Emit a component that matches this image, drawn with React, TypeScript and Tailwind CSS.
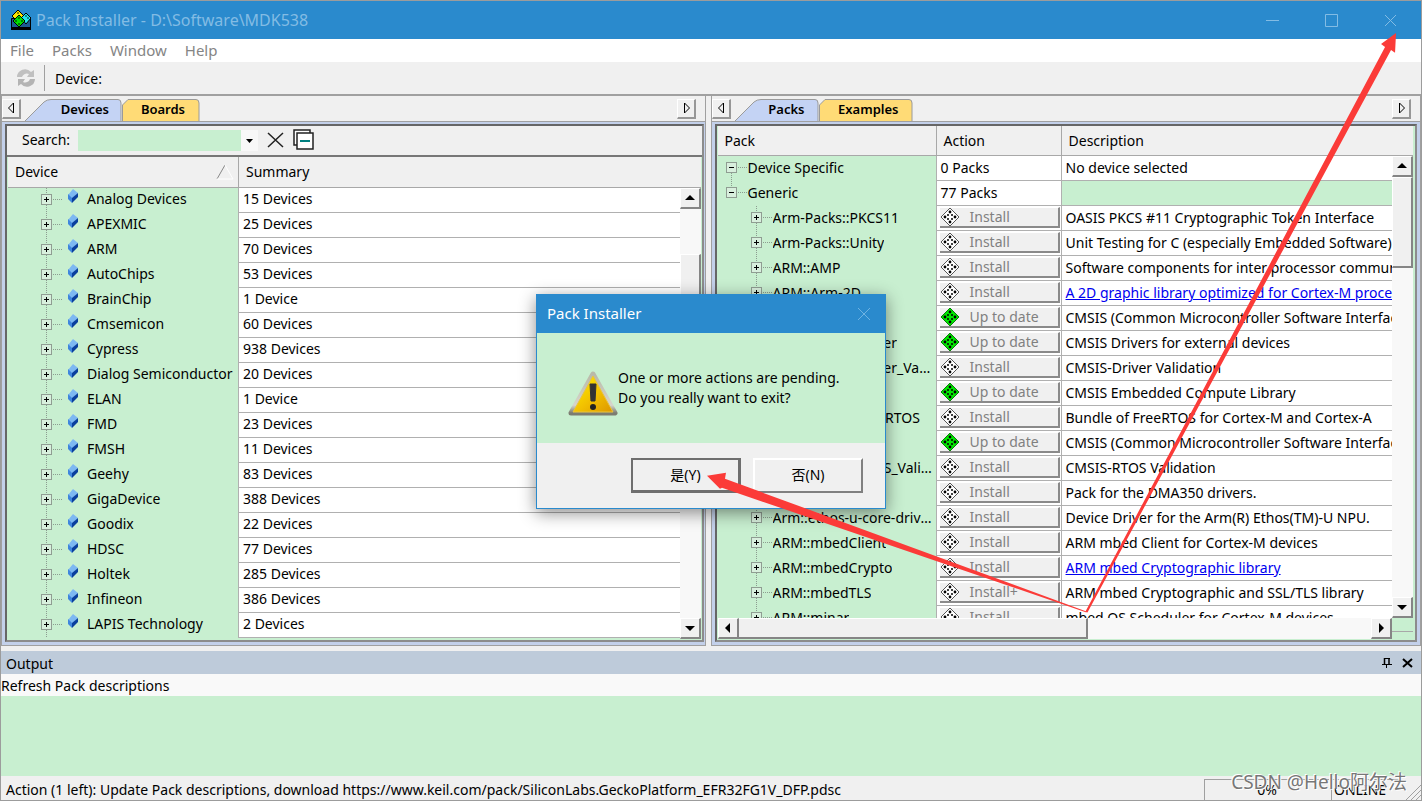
import { ReactNode } from 'react';
import clsx from 'clsx';

interface Device {
  name: string;
  summary: string;
}

interface Pack {
  name: string;
  action: 'Install' | 'Install+' | 'Up to date';
  description: string;
  link?: boolean;
}

const devices: Device[] = [
  { name: 'Analog Devices', summary: '15 Devices' },
  { name: 'APEXMIC', summary: '25 Devices' },
  { name: 'ARM', summary: '70 Devices' },
  { name: 'AutoChips', summary: '53 Devices' },
  { name: 'BrainChip', summary: '1 Device' },
  { name: 'Cmsemicon', summary: '60 Devices' },
  { name: 'Cypress', summary: '938 Devices' },
  { name: 'Dialog Semiconductor', summary: '20 Devices' },
  { name: 'ELAN', summary: '1 Device' },
  { name: 'FMD', summary: '23 Devices' },
  { name: 'FMSH', summary: '11 Devices' },
  { name: 'Geehy', summary: '83 Devices' },
  { name: 'GigaDevice', summary: '388 Devices' },
  { name: 'Goodix', summary: '22 Devices' },
  { name: 'HDSC', summary: '77 Devices' },
  { name: 'Holtek', summary: '285 Devices' },
  { name: 'Infineon', summary: '386 Devices' },
  { name: 'LAPIS Technology', summary: '2 Devices' },
];

const packs: Pack[] = [
  { name: 'Arm-Packs::PKCS11', action: 'Install', description: 'OASIS PKCS #11 Cryptographic Token Interface' },
  { name: 'Arm-Packs::Unity', action: 'Install', description: 'Unit Testing for C (especially Embedded Software)' },
  { name: 'ARM::AMP', action: 'Install', description: 'Software components for inter processor communication' },
  { name: 'ARM::Arm-2D', action: 'Install', description: 'A 2D graphic library optimized for Cortex-M processors', link: true },
  { name: 'ARM::CMSIS', action: 'Up to date', description: 'CMSIS (Common Microcontroller Software Interface Standard)' },
  { name: 'ARM::CMSIS-Driver', action: 'Up to date', description: 'CMSIS Drivers for external devices' },
  { name: 'ARM::CMSIS-Driver_Validation', action: 'Install', description: 'CMSIS-Driver Validation' },
  { name: 'ARM::CMSIS-DSP', action: 'Up to date', description: 'CMSIS Embedded Compute Library' },
  { name: 'ARM::CMSIS-FreeRTOS', action: 'Install', description: 'Bundle of FreeRTOS for Cortex-M and Cortex-A' },
  { name: 'ARM::CMSIS-NN', action: 'Up to date', description: 'CMSIS (Common Microcontroller Software Interface Standard)' },
  { name: 'ARM::CMSIS-RTOS_Validation', action: 'Install', description: 'CMSIS-RTOS Validation' },
  { name: 'ARM::DMA350', action: 'Install', description: 'Pack for the DMA350 drivers.' },
  { name: 'Arm::ethos-u-core-driver', action: 'Install', description: 'Device Driver for the Arm(R) Ethos(TM)-U NPU.' },
  { name: 'ARM::mbedClient', action: 'Install', description: 'ARM mbed Client for Cortex-M devices' },
  { name: 'ARM::mbedCrypto', action: 'Install', description: 'ARM mbed Cryptographic library', link: true },
  { name: 'ARM::mbedTLS', action: 'Install+', description: 'ARM mbed Cryptographic and SSL/TLS library' },
  { name: 'ARM::minar', action: 'Install', description: 'mbed OS Scheduler for Cortex-M devices' },
];

const AppIcon = () => (
  <svg width="20" height="20" viewBox="0 0 20 20" className="shrink-0">
    <path d="M0.500 8.500H19.500V18H0.500Z" fill="#1c5c92" stroke="#000" />
    <path d="M0 17H20V20H0Z" fill="#000" />
    <path d="M7 0l6 6-6 6-6-6z" fill="#ffe600" stroke="#000" />
    <path d="M15 3l5 5-5 6-5-6z" fill="#22e6ee" stroke="#000" />
    <path d="M8 5l6 6-6 6-6-6z" fill="#00e000" stroke="#000" />
    <g fill="#000">
      <circle cx="8" cy="8" r="0.800" />
      <circle cx="5" cy="11" r="0.800" />
      <circle cx="11" cy="11" r="0.800" />
      <circle cx="8" cy="14" r="0.800" />
      <circle cx="7" cy="3" r="0.800" />
      <circle cx="17" cy="8" r="0.800" />
      <circle cx="15" cy="6" r="0.800" />
    </g>
  </svg>
);

const RefreshIcon = () => (
  <svg width="20" height="20" viewBox="0 0 20 20">
    <path d="M1 9a8 8 0 0 1 14-5l3-2v7h-7l2-3a5 5 0 0 0-7 3z" fill="#c0c0c0" />
    <path d="M19 11a8 8 0 0 1-14 5l-3 2v-7h7l-2 3a5 5 0 0 0 7-3z" fill="#b4b4b4" />
  </svg>
);

const DeviceIcon = () => (
  <svg width="12" height="14" viewBox="0 0 12 14" className="mt-px shrink-0">
    <path d="M6 0l5 4-6 6-4-4z" fill="#7db8f2" />
    <path d="M1 5l4 4v5l-4-4z" fill="#3f86dc" />
    <path d="M11 4v4l-6 6V9z" fill="#0a3f9e" />
  </svg>
);

const DiceIcon = ({ installed }: { installed: boolean }) => (
  <svg width="18" height="18" viewBox="0 0 18 18" className="shrink-0">
    <path d="M9 0l9 9-9 9-9-9z" fill={installed ? '#00e600' : '#fff'} stroke={installed ? '#087a08' : '#555'} />
    <g fill="#000">
      <circle cx="9" cy="4" r="1.400" />
      <circle cx="4" cy="9" r="1.400" />
      <circle cx="14" cy="9" r="1.400" />
      <circle cx="9" cy="14" r="1.400" />
      <circle cx="7" cy="7" r="1" />
      <circle cx="11" cy="7" r="1" />
      <circle cx="7" cy="11" r="1" />
      <circle cx="11" cy="11" r="1" />
    </g>
  </svg>
);

const WarningIcon = () => (
  <svg width="50" height="46" viewBox="0 0 50 46" className="shrink-0">
    <defs>
      <linearGradient id="warning-fill" x1="0" y1="0" x2="1" y2="1">
        <stop offset="0" stopColor="#fff200" />
        <stop offset="0.55" stopColor="#f2c000" />
        <stop offset="1" stopColor="#dc9600" />
      </linearGradient>
      <linearGradient id="warning-rim" x1="0" y1="0" x2="0" y2="1">
        <stop offset="0" stopColor="#b9b9a8" />
        <stop offset="0.8" stopColor="#d6d6cc" />
        <stop offset="1" stopColor="#7c7c70" />
      </linearGradient>
    </defs>
    <path d="M25 3L47 42H3z" fill="url(#warning-rim)" stroke="url(#warning-rim)" strokeWidth="5" strokeLinejoin="round" />
    <path d="M25 5L45 41H5z" fill="url(#warning-fill)" stroke="#e8c440" strokeWidth="1" strokeLinejoin="round" />
    <path d="M22 13h6l-1 17h-4z" fill="#333" stroke="#333" strokeLinejoin="round" />
    <circle cx="25" cy="36" r="3" fill="#222" />
  </svg>
);

interface TreeNodeProps {
  expanded?: boolean;
  up?: boolean;
  down?: boolean;
}

const TreeNode = ({ expanded, up = true, down = true }: TreeNodeProps) => (
  <svg height="25" className="w-[26px] shrink-0">
    <g stroke="#8c9c90" strokeDasharray="1 1">
      {up && <path d="M5.500 0V6" />}
      {down && <path d="M5.500 17V25" />}
      <path d="M12 11.500H21" />
    </g>
    <rect x="0.500" y="6.500" width="10" height="10" fill="#d8efdd" stroke="#8f9d92" />
    <path d="M3 11.500h5" stroke="#000" />
    {!expanded && <path d="M5.500 9v5" stroke="#000" />}
  </svg>
);

const arrows = {
  up: 'M1 8L6 3L11 8Z',
  down: 'M1 4L6 9L11 4Z',
  left: 'M8 1L3 6L8 11Z',
  right: 'M4 1L9 6L4 11Z',
};

const ScrollButton = ({ direction }: { direction: keyof typeof arrows }) => (
  <button
    aria-label={`Scroll ${direction}`}
    className="flex size-[21px] shrink-0 items-center justify-center border-r-2 border-b-2 border-t border-l border-t-white border-l-white border-r-[#858585] border-b-[#858585] bg-[#f0f0f0]"
  >
    <svg width="12" height="12"><path d={arrows[direction]} /></svg>
  </button>
);

const TabArrow = ({ direction }: { direction: 'left' | 'right' }) => (
  <button
    aria-label={`Tabs ${direction}`}
    className="flex h-5 w-[19px] shrink-0 items-center justify-center border-r-2 border-b-2 border-t border-l border-t-white border-l-white border-r-[#979797] border-b-[#979797] bg-[#f0f0f0]"
  >
    <svg width="12" height="12" fill="none" stroke="#000">
      <path d={direction === 'left' ? 'M8.500 1V11L3.500 6Z' : 'M4.500 1V11L9.500 6Z'} />
    </svg>
  </button>
);

interface TabProps {
  label: string;
  width: number;
  active?: boolean;
  className: string;
}

const Tab = ({ label, width, active, className }: TabProps) => (
  <button className={clsx('relative h-[22px] shrink-0 pb-[2px] text-right text-[13px] leading-5 font-semibold', className)}>
    <svg width={width} height="22" className="absolute inset-0">
      <path
        d={
          active
            ? `M0 22L19 3Q22 0.500 26 0.500H${width - 4}Q${width - 1} 0.500 ${width - 1} 4V22`
            : `M0.500 22V6L6 0.500H${width - 4}Q${width - 1} 0.500 ${width - 1} 4V22`
        }
        fill={active ? '#c4d3f4' : '#ffdb76'}
        stroke="#9a9a9a"
      />
    </svg>
    <span className="relative">{label}</span>
  </button>
);

interface TabbedPanelProps {
  tabs: ReactNode;
  className: string;
  frameClassName: string;
  children: ReactNode;
}

const TabbedPanel = ({ tabs, className, frameClassName, children }: TabbedPanelProps) => (
  <section className={clsx('flex min-w-0 flex-col border-x border-[#a0a0a0]', className)}>
    <div className="flex h-[26px] shrink-0 items-center border-b border-[#a0a0a0] pr-[9px]">
      <TabArrow direction="left" />
      <div className="flex flex-1 items-end self-end pl-1">{tabs}</div>
      <TabArrow direction="right" />
    </div>
    <div className={clsx('flex min-h-0 flex-1 flex-col border-t-2 border-b-[3px] border-l-[3px] border-[#c3d0ea]', frameClassName)}>
      <div className="flex min-h-0 flex-1 flex-col border-2 border-t-[#666] border-r-[#8c8c8c] border-b-[#8c8c8c] border-l-[#666]">
        {children}
      </div>
    </div>
    <div className="h-px shrink-0 bg-[#a0a0a0]" />
  </section>
);

const headCell = 'border-b border-[#a8a8a8] pl-[7px] text-left font-normal';

const DeviceTable = () => (
  <div className="flex min-h-0 flex-1 flex-col border-t-2 border-[#777] pr-px pl-px">
    <table className="w-full table-fixed border-separate border-spacing-0 bg-[#f0f0f0]">
      <thead>
        <tr className="h-[31px]">
          <th className={clsx(headCell, 'w-[231px] border-r')}>
            <div className="flex items-center justify-between pr-1">
              Device
              <svg width="18" height="16" fill="none">
                <path d="M1 15L9 1" stroke="#888" />
                <path d="M9 1L17 15H1" stroke="#fff" />
              </svg>
            </div>
          </th>
          <th className={headCell}>Summary</th>
        </tr>
      </thead>
    </table>
    <div className="flex min-h-0 flex-1">
      <div className="min-w-0 flex-1 overflow-hidden">
        <table className="w-full table-fixed border-separate border-spacing-0">
          <tbody>
            {devices.map((device) => (
              <tr key={device.name} className="h-[25px]">
                <td className="w-[231px] border-r border-[#b0b0b0] p-0">
                  <div className="flex h-[25px] items-start pl-[33px] leading-[22px] whitespace-nowrap">
                    <TreeNode />
                    <DeviceIcon />
                    <span className="pl-[8px]">{device.name}</span>
                  </div>
                </td>
                <td className="border-b border-[#b0b0b0] bg-white p-0 pb-[2px] pl-1 leading-[22px]">{device.summary}</td>
              </tr>
            ))}
          </tbody>
        </table>
      </div>
      <div className="flex w-[21px] flex-col bg-[#f8f8f8]">
        <ScrollButton direction="up" />
        <div className="flex-[45]" />
        <div className="flex-[60] border-t border-l border-r-2 border-b-2 border-t-white border-l-white border-r-[#858585] border-b-[#858585] bg-[#f0f0f0]" />
        <div className="flex-[305]" />
        <ScrollButton direction="down" />
      </div>
    </div>
    <div className="h-px shrink-0" />
  </div>
);

const PackTable = () => (
  <div className="flex min-h-0 flex-1 flex-col pr-[2px] pl-px">
    <table className="w-full table-fixed border-separate border-spacing-0 bg-[#f0f0f0]">
      <thead>
        <tr className="h-[30px]">
          <th className={clsx(headCell, 'w-[219px] border-r')}>Pack</th>
          <th className={clsx(headCell, 'w-[125px] border-r')}>Action</th>
          <th className={headCell}>Description</th>
        </tr>
      </thead>
    </table>
    <div className="flex min-h-0 flex-1">
      <div className="flex min-w-0 flex-1 flex-col">
        <div className="min-h-0 flex-1 overflow-hidden">
          <table className="w-full table-fixed border-separate border-spacing-0">
            <tbody>
              <tr className="h-[25px]">
                <td className="w-[219px] border-r border-[#b0b0b0] p-0">
                  <div className="flex h-[25px] items-start pl-[8px] leading-6">
                    <TreeNode expanded up={false} />
                    <span className="-ml-1">Device Specific</span>
                  </div>
                </td>
                <td className="w-[125px] border-r border-b border-[#b0b0b0] bg-white p-0 pl-1">0 Packs</td>
                <td className="border-b border-[#b0b0b0] bg-white p-0 pl-1">No device selected</td>
              </tr>
              <tr className="h-[25px]">
                <td className="border-r border-[#b0b0b0] p-0">
                  <div className="flex h-[25px] items-start pl-[8px] leading-6">
                    <TreeNode expanded down={false} />
                    <span className="-ml-1">Generic</span>
                  </div>
                </td>
                <td className="border-r border-b border-[#b0b0b0] bg-white p-0 pl-1">77 Packs</td>
                <td className="border-b border-[#b0b0b0] p-0" />
              </tr>
              {packs.map((pack) => (
                <tr key={pack.name} className="h-[25px]">
                  <td className="border-r border-[#b0b0b0] p-0">
                    <div className="flex h-[25px] items-start pr-[3px] pl-[33px] leading-6">
                      <TreeNode />
                      <span className="-ml-1 truncate">{pack.name}</span>
                    </div>
                  </td>
                  <td className="border-r border-b border-[#b0b0b0] bg-white p-0 pr-px pb-px pl-[3px]">
                    <button className="flex h-[21px] w-full items-center gap-[11px] border-t border-r-2 border-b-2 border-t-white border-r-[#8a8a8a] border-b-[#8a8a8a] bg-[#f0f0f0] pl-px text-[#808080]">
                      <DiceIcon installed={pack.action === 'Up to date'} />
                      {pack.action}
                    </button>
                  </td>
                  <td className="overflow-hidden border-b border-[#b0b0b0] bg-white p-0 pl-1 whitespace-nowrap">
                    {pack.link ? (
                      <a href="#pack" className="text-[#0000f0] underline">{pack.description}</a>
                    ) : (
                      pack.description
                    )}
                  </td>
                </tr>
              ))}
            </tbody>
          </table>
        </div>
        <div className="flex h-[21px] shrink-0 bg-[#f8f8f8]">
          <ScrollButton direction="left" />
          <div className="flex-[349] border-t border-r-2 border-b-2 border-t-white border-r-[#858585] border-b-[#858585] bg-[#f0f0f0]" />
          <div className="flex-[284]" />
          <ScrollButton direction="right" />
        </div>
      </div>
      <div className="flex w-[21px] flex-col">
        <ScrollButton direction="up" />
        <div className="flex-[89] border-t border-l border-r-2 border-b-2 border-t-white border-l-white border-r-[#858585] border-b-[#858585] bg-[#f0f0f0]" />
        <div className="flex-[331] bg-[#f8f8f8]" />
        <ScrollButton direction="down" />
        <div className="h-[14px] shrink-0 border-b border-[#a8a8a8]" />
        <div className="h-[7px] shrink-0" />
      </div>
    </div>
    <div className="h-px shrink-0" />
  </div>
);

const ExitDialog = () => (
  <div className="absolute inset-0 flex items-center justify-center pt-[2px]">
    <div
      role="dialog"
      aria-labelledby="exit-title"
      className="flex w-[350px] flex-col border border-[#2a8acd] bg-[#f0f0f0] shadow-[0_4px_16px_rgba(0,0,0,0.45)]"
    >
      <div className="flex h-[38px] items-center justify-between bg-[#2a8acd] pr-[14px] pl-[10px] text-white">
        <h2 id="exit-title" className="text-[15px]">Pack Installer</h2>
        <button aria-label="Close">
          <svg width="14" height="14" stroke="#6fb3e2"><path d="M1 1L13 13M13 1L1 13" /></svg>
        </button>
      </div>
      <div className="flex h-[110px] items-start bg-[#c8efd0] pl-[31px]">
        <div className="pt-[38px]"><WarningIcon /></div>
        <p className="pt-[35px] leading-5">
          One or more actions are pending.
          <br />
          Do you really want to exit?
        </p>
      </div>
      <div className="flex h-[65px] items-center justify-end gap-3 pr-[22px]">
        <button className="h-[35px] w-[110px] border-2 border-r-[3px] border-b-[3px] border-[#6e6e6e] bg-[#f0f0f0] pb-px">是(Y)</button>
        <button className="h-[35px] w-[110px] border-2 border-t-white border-l-white border-r-[#808080] border-b-[#808080] bg-[#f0f0f0] pb-[2px]">否(N)</button>
      </div>
    </div>
  </div>
);

const Annotations = () => (
  <svg viewBox="0 0 1422 801" preserveAspectRatio="none" className="pointer-events-none absolute inset-0 h-full w-full">
    <g fill="#fb3b38">
      <path d="M1086 612L1386 46L1382 43L1397 32L1396 52L1392 49L1088 613Z" />
      <path d="M1087 613L722 488L720 489L707 476L726 473L725 479L1087 612Z" />
    </g>
  </svg>
);

const App = () => {
  return (
    <div className="relative flex h-screen flex-col overflow-hidden border border-[#9c9c9c] bg-[#f0f0f0] font-['Noto_Sans','Noto_Sans_CJK_SC',sans-serif] text-sm text-black">
      <header className="flex h-[38px] shrink-0 items-center bg-[#2a8acd] pl-[10px] text-[#83bce4]">
        <AppIcon />
        <h1 className="flex-1 pl-[5px] text-base">Pack Installer - D:\Software\MDK538</h1>
        <div className="flex gap-[46px] pr-6">
          <button aria-label="Minimize">
            <svg width="13" height="13" stroke="#83bce4"><path d="M0 6.500H13" /></svg>
          </button>
          <button aria-label="Maximize">
            <svg width="13" height="13" stroke="#83bce4" fill="none"><path d="M0.500 0.500H12.500V12.500H0.500Z" /></svg>
          </button>
          <button aria-label="Close window">
            <svg width="13" height="13" stroke="#83bce4"><path d="M1 1L12 12M12 1L1 12" /></svg>
          </button>
        </div>
      </header>

      <nav className="flex h-[23px] shrink-0 items-center gap-[18px] bg-white pt-px pl-[9px] text-[15px] text-[#858585]">
        <button>File</button>
        <button>Packs</button>
        <button>Window</button>
        <button>Help</button>
      </nav>

      <div className="flex h-[34px] shrink-0 items-center border-b-2 border-[#a0a0a0] pl-[15px]">
        <button aria-label="Refresh"><RefreshIcon /></button>
        <div className="mr-[10px] ml-2 h-[26px] w-px bg-[#a0a0a0]" />
        <span className="pt-[2px]">Device:</span>
      </div>

      <main className="flex min-h-0 flex-1 gap-[5px]">
        <TabbedPanel
          className="flex-[705]"
          frameClassName="border-r"
          tabs={
            <>
              <Tab label="Devices" width={97} active className="w-[97px] pr-[13px]" />
              <Tab label="Boards" width={78} className="w-[78px] pr-[15px]" />
            </>
          }
        >
          <div className="flex h-[29px] shrink-0 items-center bg-[#f0f0f0] pl-[15px]">
            <label htmlFor="search" className="pb-[2px]">Search:</label>
            <input id="search" className="ml-[8px] h-[21px] w-[163px] bg-[#c8efd0] px-1 outline-none" />
            <button aria-label="Search history" className="flex h-[21px] w-[17px] items-center justify-center bg-[#f8f8f8]">
              <svg width="7" height="4"><path d="M0 0H7L3.500 4Z" /></svg>
            </button>
            <button aria-label="Clear search" className="ml-[9px] pb-[2px]">
              <svg width="17" height="16" stroke="#222" strokeWidth="1.500"><path d="M1 1L16 15M16 1L1 15" /></svg>
            </button>
            <button aria-label="Collapse all" className="ml-[9px] pb-[2px]">
              <svg width="21" height="21" fill="#fff" stroke="#222" strokeWidth="1.500">
                <path d="M1 1H17V16H1Z" />
                <path d="M4 4H20V20H4Z" />
                <path d="M7 12H17" stroke="#008080" strokeWidth="2" />
              </svg>
            </button>
          </div>
          <div className="flex min-h-0 flex-1 flex-col bg-[#c8efd0]">
            <DeviceTable />
          </div>
        </TabbedPanel>

        <TabbedPanel
          className="flex-[711]"
          frameClassName="border-r-[3px]"
          tabs={
            <>
              <Tab label="Packs" width={84} active className="w-[84px] pr-[14px]" />
              <Tab label="Examples" width={94} className="w-[94px] pr-[14px]" />
            </>
          }
        >
          <div className="flex min-h-0 flex-1 flex-col bg-[#c8efd0]">
            <PackTable />
          </div>
        </TabbedPanel>
      </main>

      <section className="mt-[5px] shrink-0">
        <div className="flex h-[23px] items-center bg-[#becbda] pr-2 pl-[5px]">
          <h2 className="flex-1 pt-[2px]">Output</h2>
          <button aria-label="Pin" className="mr-[10px]">
            <svg width="10" height="11" fill="none" stroke="#000">
              <path d="M2.500 1V7M7 1V7" strokeWidth="1.500" />
              <path d="M2 1.500H8M0 7.500H10M4.500 8V11" />
            </svg>
          </button>
          <button aria-label="Close output">
            <svg width="11" height="10" stroke="#000" strokeWidth="2"><path d="M1 1L10 9M10 1L1 9" /></svg>
          </button>
        </div>
        <p className="h-[22px] bg-[#f9f9f9] leading-6">Refresh Pack descriptions</p>
        <div className="h-20 bg-[#c8efd0]" />
      </section>

      <footer className="flex h-6 shrink-0 items-end pl-[5px]">
        <span className="flex-1 leading-5">
          Action (1 left): Update Pack descriptions, download https://www.keil.com/pack/SiliconLabs.GeckoPlatform_EFR32FG1V_DFP.pdsc
        </span>
        <span className="mr-[2px] h-[21px] w-[125px] border-t border-l border-[#a0a0a0] text-center leading-5">0%</span>
        <span className="h-[21px] w-[70px] border-t border-l border-[#a0a0a0] pl-[2px] leading-5">ONLINE</span>
        <svg width="20" height="20" stroke="#a0a0a0">
          <path d="M5 20L20 5M10 20L20 10M15 20L20 15" />
        </svg>
      </footer>

      <ExitDialog />
      <Annotations />
      <div className="pointer-events-none absolute right-[14px] bottom-1 text-[19px] leading-7 text-[#777] [text-shadow:1px_1px_0_#fff,-1px_-1px_0_#fff]">
        CSDN @Hello阿尔法
      </div>
    </div>
  );
};

export default App;
